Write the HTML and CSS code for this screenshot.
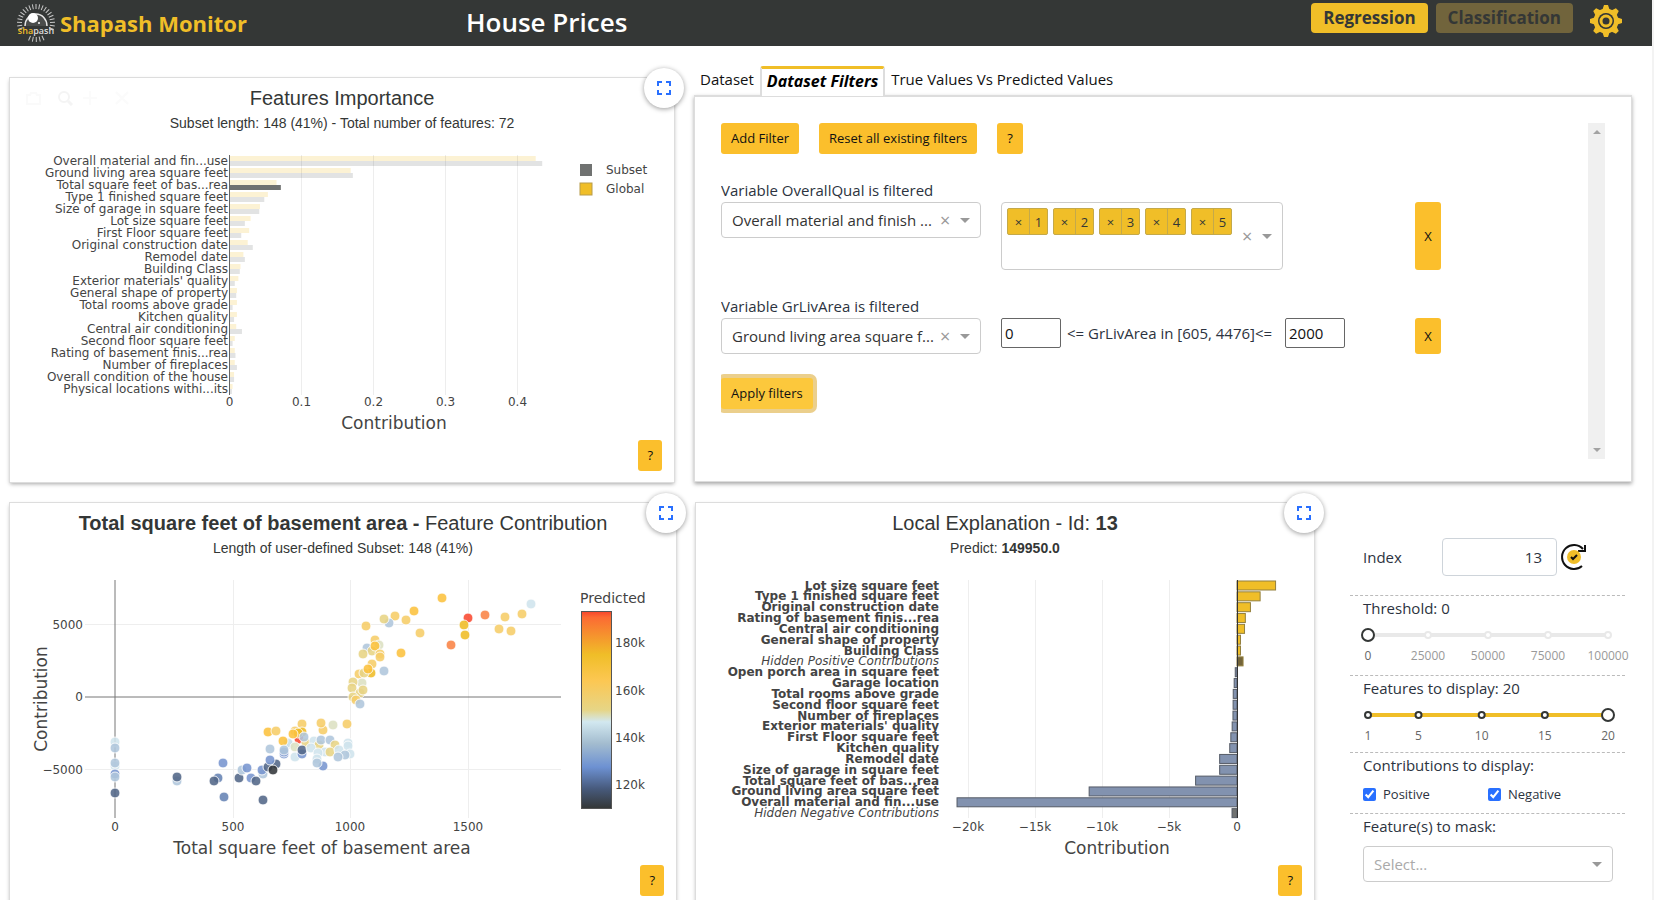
FILE: index.html
```html
<!DOCTYPE html>
<html lang="en">
<head>
  <meta charset="UTF-8">
  <title>Shapash Monitor</title>
  <link rel="stylesheet" href="styles.css">
</head>
<body>

  <header class="header">
    <a class="brand" href="#">
      <svg class="logo" viewBox="0 0 40 40" aria-hidden="true">
        <g id="rays" stroke="#c9c9c9" stroke-width="1"></g>
        <path d="M9 23a11 12 0 0 1 22 0" fill="#4a4c4b" stroke="#e6e6e6" stroke-width="1.5"/>
        <circle cx="17" cy="15" r="5" fill="#fff"/>
        <circle cx="23" cy="20" r="1" fill="#fff"/>
        <text x="20" y="31" text-anchor="middle" class="logo-text"><tspan fill="#f0be28">sha</tspan><tspan fill="#ddd">pash</tspan></text>
      </svg>
      <span>Shapash Monitor</span>
    </a>
    <h1 class="title">House Prices</h1>
    <nav class="modes">
      <button class="mode">Regression</button>
      <button class="mode mode-off">Classification</button>
      <button class="gear" aria-label="Settings">
        <svg viewBox="0 0 32 32">
          <g id="teeth" fill="#f0be28"></g>
          <circle cx="16" cy="16" r="10" fill="none" stroke="#f0be28" stroke-width="5"/>
          <circle cx="16" cy="16" r="8" fill="#343736"/>
          <circle cx="16" cy="16" r="5" fill="none" stroke="#f0be28" stroke-width="3"/>
        </svg>
      </button>
    </nav>
  </header>

  <main class="main">
    <div class="row row-top">
      <section class="card card-importance">
        <h2>Features Importance</h2>
        <p class="subtitle">Subset length: 148 (41%) - Total number of features: 72</p>
        <svg class="plot" id="importance" viewBox="0 60 664 300"></svg>
        <svg class="modebar" viewBox="0 0 106 16" aria-hidden="true">
          <path d="M1 5h3l1-2h5l1 2h3v9h-13z" fill="none" stroke="#fafafa" stroke-width="2"/>
          <circle cx="38" cy="7" r="5" fill="none" stroke="#f4f4f4" stroke-width="2"/>
          <path d="M42 11l4 4" stroke="#f4f4f4" stroke-width="3"/>
          <path d="M64 1v14M57 8h14M90 2l12 12M102 2l-12 12" stroke="#fbfbfb" stroke-width="2"/>
        </svg>
        <button class="expand" aria-label="Expand"><svg viewBox="0 0 14 14"><path d="M1 5V1h4M9 1h4v4M13 9v4H9M5 13H1V9"/></svg></button>
        <button class="btn help">?</button>
      </section>

      <section class="filters">
        <nav class="tabs">
          <a class="tab" href="#">Dataset</a>
          <a class="tab tab-active" href="#">Dataset Filters</a>
          <a class="tab" href="#">True Values Vs Predicted Values</a>
        </nav>
        <div class="panel">
          <div class="panel-body">
            <div class="actions">
              <button class="btn">Add Filter</button>
              <button class="btn">Reset all existing filters</button>
              <button class="btn">?</button>
            </div>

            <label class="filter-label" for="var1">Variable OverallQual is filtered</label>
            <div class="filter">
              <div class="dropdown">
                <select id="var1"><option>Overall material and finish ...</option></select>
                <span class="clear">×</span><span class="arrow"></span>
              </div>
              <div class="multi">
                <div class="chips">
                  <span class="chip"><button aria-label="Remove 1">×</button><span>1</span></span>
                  <span class="chip"><button aria-label="Remove 2">×</button><span>2</span></span>
                  <span class="chip"><button aria-label="Remove 3">×</button><span>3</span></span>
                  <span class="chip"><button aria-label="Remove 4">×</button><span>4</span></span>
                  <span class="chip"><button aria-label="Remove 5">×</button><span>5</span></span>
                </div>
                <span class="clear">×</span><span class="arrow"></span>
              </div>
              <button class="btn remove">X</button>
            </div>

            <label class="filter-label" for="var2">Variable GrLivArea is filtered</label>
            <div class="filter">
              <div class="dropdown">
                <select id="var2"><option>Ground living area square f...</option></select>
                <span class="clear">×</span><span class="arrow"></span>
              </div>
              <div class="range">
                <input type="text" value="0" aria-label="Minimum">
                <span>&lt;= GrLivArea in [605, 4476]&lt;=</span>
                <input type="text" value="2000" aria-label="Maximum">
              </div>
              <button class="btn remove">X</button>
            </div>

            <button class="btn apply">Apply filters</button>
          </div>
          <div class="scrollbar"><span class="up"></span><span class="down"></span></div>
        </div>
      </section>
    </div>

    <div class="row row-bottom">
      <section class="card">
        <h2><b>Total square feet of basement area -</b> Feature Contribution</h2>
        <p class="subtitle">Length of user-defined Subset: 148 (41%)</p>
        <svg class="plot" id="contribution" viewBox="0 60 666 300"></svg>
        <button class="expand" aria-label="Expand"><svg viewBox="0 0 14 14"><path d="M1 5V1h4M9 1h4v4M13 9v4H9M5 13H1V9"/></svg></button>
        <button class="btn help">?</button>
      </section>

      <section class="card">
        <h2>Local Explanation - Id: <b>13</b></h2>
        <p class="subtitle">Predict: <b>149950.0</b></p>
        <svg class="plot" id="local" viewBox="0 60 618 300"></svg>
        <button class="expand" aria-label="Expand"><svg viewBox="0 0 14 14"><path d="M1 5V1h4M9 1h4v4M13 9v4H9M5 13H1V9"/></svg></button>
        <button class="btn help">?</button>
      </section>

      <aside class="side">
        <div class="block block-index">
          <label for="index">Index</label>
          <input id="index" type="text" value="13">
          <button class="refresh" aria-label="Apply index">
            <svg viewBox="0 0 28 28">
              <path d="M22 23a12 12 0 1 1 1-17" fill="none" stroke="#111" stroke-width="2"/>
              <path d="M25 2v6h-7" fill="none" stroke="#111" stroke-width="2"/>
              <circle cx="14" cy="14" r="7" fill="#f0be28"/>
              <path d="M11 14l2 2 4-4" fill="none" stroke="#111" stroke-width="2"/>
            </svg>
          </button>
        </div>

        <div class="block">
          <label for="threshold">Threshold: 0</label>
          <div class="slider">
            <svg class="marks" data-marks="0,25000,50000,75000,100000" data-min="0" data-max="100000"></svg>
            <input id="threshold" type="range" min="0" max="100000" value="0">
          </div>
        </div>

        <div class="block block-features">
          <label for="features">Features to display: 20</label>
          <div class="slider">
            <svg class="marks marks-on" data-marks="1,5,10,15,20" data-min="1" data-max="20"></svg>
            <input id="features" type="range" min="1" max="20" value="20">
          </div>
        </div>

        <div class="block">
          <span>Contributions to display:</span>
          <div class="checks">
            <label><input type="checkbox" checked>Positive</label>
            <label><input type="checkbox" checked>Negative</label>
          </div>
        </div>

        <div class="block">
          <label for="mask">Feature(s) to mask:</label>
          <div class="dropdown mask">
            <select id="mask"><option>Select...</option></select>
            <span class="arrow"></span>
          </div>
        </div>
      </aside>
    </div>
  </main>

  <script src="script.js"></script>
</body>
</html>
```
FILE: styles.css
```css
* {
  box-sizing: border-box;
}

body {
  margin: 0;
  height: 100vh;
  overflow: hidden;
  border-right: 2px solid #f3f3f3;
  font-family: "Open Sans", "Noto Sans", sans-serif;
  font-size: 15px;
  line-height: 24px;
  color: #2c3340;
  background: #fff;
}

button, input, select {
  font: inherit;
  color: inherit;
}

button {
  border: none;
  padding: 0;
  background: none;
  cursor: pointer;
}

/* Header */
.header {
  display: grid;
  grid-template-columns: 467fr 847fr auto;
  height: 46px;
  padding-right: 30px;
  background: #343736;
}

.brand {
  display: flex;
  align-items: center;
  gap: 4px;
  padding-left: 16px;
  font-size: 22px;
  font-weight: 700;
  color: #f0be28;
  text-decoration: none;
}

.logo {
  width: 40px;
  height: 42px;
}

.logo-text {
  font-size: 9px;
  font-weight: 600;
}

.title {
  margin: 0;
  font-size: 26px;
  font-weight: 600;
  line-height: 44px;
  color: #fff;
}

.modes {
  display: flex;
  align-items: flex-start;
  gap: 8px;
  padding-top: 3px;
}

.mode {
  height: 30px;
  padding: 0 12px;
  border-radius: 4px;
  font-size: 17px;
  font-weight: 700;
  color: #343736;
  background: #f0be28;
}

.mode-off {
  background: #71643c;
}

.gear {
  width: 32px;
  height: 36px;
  margin-left: 9px;
}

.gear svg {
  display: block;
  width: 32px;
}

/* Layout */
.main {
  padding: 20px 20px 0 10px;
}

.row {
  display: grid;
}

.row-top {
  grid-template-columns: 664fr 938fr;
  gap: 20px;
}

.row-bottom {
  grid-template-columns: 666fr 20fr 618fr 36fr 275fr 7fr;
  margin-top: 21px;
}

.row-bottom > :nth-child(2) {
  grid-column: 3;
}

.row-bottom > .side {
  grid-column: 5;
}

/* Chart cards */
.card {
  position: relative;
  height: 404px;
  padding-top: 7px;
  box-shadow: 0 0 0 1px #ddd, 0 2px 4px rgba(0, 0, 0, 0.35);
  background: #fff;
  font-family: "Liberation Sans", Arial, sans-serif;
  text-align: center;
}

.card-importance {
  margin-top: 12px;
}

.card h2 {
  margin: 0;
  font-size: 20px;
  font-weight: 400;
  line-height: 26px;
  color: #343736;
}

.subtitle {
  margin: 0 0 3px;
  font-size: 14px;
  line-height: 24px;
  color: #343736;
}

.plot {
  display: block;
  width: 100%;
  height: 300px;
  font-family: "DejaVu Sans", Verdana, sans-serif;
  font-size: 12px;
  fill: #444;
}

.plot .axis-title {
  font-size: 17px;
}

.plot .bar-title {
  font-size: 14px;
}

.plot .strong {
  font-weight: 700;
}

.plot .hidden-row {
  font-style: italic;
}

.modebar {
  position: absolute;
  left: 16px;
  top: 12px;
  width: 106px;
}

.expand {
  position: absolute;
  right: -10px;
  top: -10px;
  width: 40px;
  height: 40px;
  border-radius: 50%;
  background: #fff;
  box-shadow: 0 1px 5px rgba(0, 0, 0, 0.4);
}

.expand svg {
  display: block;
  width: 14px;
  margin: auto;
  fill: none;
  stroke: #2970ff;
  stroke-width: 2;
}

.btn {
  height: 31px;
  padding: 0 9px;
  border-radius: 3px;
  font-family: "Open Sans", "Noto Sans", sans-serif;
  font-size: 13px;
  line-height: 31px;
  color: #111;
  background: #fbbf2c;
}

.help {
  position: absolute;
  right: 12px;
  bottom: 11px;
}

/* Filters */
.filters {
  display: flex;
  flex-direction: column;
}

.tabs {
  display: flex;
  height: 30px;
}

.tab {
  padding: 1px 6px 0;
  color: #111;
  text-decoration: none;
}

.tab-active {
  position: relative;
  z-index: 1;
  padding: 0 5px;
  border: solid #ddd;
  border-width: 3px 2px 0;
  border-top-color: #f0be28;
  border-radius: 3px 3px 0 0;
  font-size: 16px;
  font-weight: 700;
  font-style: italic;
  background: #fff;
  color: #000;
}

.panel {
  display: flex;
  flex: 1;
  margin-top: -1px;
  padding: 26px 26px 22px;
  border: 1px solid #ddd;
  border-top-width: 2px;
  box-shadow: 0 2px 4px rgba(0, 0, 0, 0.35);
}

.panel-body {
  flex: 1;
  overflow: hidden;
}

.actions {
  display: flex;
  gap: 20px;
  margin-bottom: 24px;
}

.actions .btn {
  padding: 0 10px;
}

.filter-label {
  display: block;
}

.filter {
  display: grid;
  grid-template-columns: 260px 394px 26px;
  column-gap: 20px;
  margin-bottom: 24px;
}

.dropdown {
  display: flex;
  align-items: center;
  height: 36px;
  padding-right: 10px;
  border: 1px solid #ccc;
  border-radius: 4px;
  color: #333;
}

.dropdown select {
  flex: 1;
  min-width: 0;
  height: 34px;
  padding: 0 0 0 10px;
  border: none;
  appearance: none;
  background: none;
}

.clear {
  width: 20px;
  font-size: 18px;
  color: #999;
}

.arrow {
  border: 5px solid transparent;
  border-top-color: #999;
  border-bottom: none;
}

.multi {
  display: flex;
  align-items: center;
  width: 282px;
  height: 68px;
  padding: 5px 10px 5px 5px;
  border: 1px solid #ccc;
  border-radius: 4px;
}

.chips {
  display: flex;
  flex: 1;
  gap: 5px;
  align-self: flex-start;
}

.chip {
  display: flex;
  width: 41px;
  height: 27px;
  border: 1px solid #c4a94a;
  border-radius: 2px;
  font-size: 13px;
  line-height: 27px;
  color: #343736;
  background: #f0be28;
}

.chip button {
  width: 22px;
  border-right: 1px solid #c4a94a;
}

.chip span {
  flex: 1;
  text-align: center;
}

.remove {
  height: 100%;
}

.range {
  display: flex;
  align-items: flex-start;
  gap: 6px;
  width: 344px;
  line-height: 30px;
}

.range input {
  width: 60px;
  height: 30px;
  padding: 0 3px;
  border: 1px solid #666;
  border-radius: 2px;
  color: #111;
}

.range span {
  flex: 1;
  white-space: nowrap;
}

.apply {
  padding: 0 10px;
  background: #fcc83c;
  box-shadow: 0 0 0 4px #ebcf8c;
}

.scrollbar {
  display: flex;
  flex-direction: column;
  justify-content: space-between;
  align-items: center;
  width: 17px;
  padding: 7px 0;
  background: #f0f0f0;
}

.up, .down {
  border: 4px solid transparent;
}

.up {
  border-bottom-color: #a3a3a3;
  border-top: none;
}

.down {
  border-top-color: #a3a3a3;
  border-bottom: none;
}

/* Side controls */
.block {
  padding: 0 12px 6px 13px;
  border-bottom: 1px dashed #bbb;
}

.block:last-child {
  border: none;
}

.block-index {
  display: flex;
  align-items: center;
  padding: 35px 0 19px 13px;
}

.block-index label {
  flex: 1;
}

.block-index input {
  width: 115px;
  height: 38px;
  padding: 0 14px;
  border: 1px solid #ced4da;
  border-radius: 4px;
  text-align: right;
}

.refresh {
  width: 28px;
  height: 28px;
  margin: 0 37px 0 3px;
}

.block-features {
  padding-bottom: 3px;
}

.slider {
  display: grid;
  margin: 5px -2px 0;
}

.slider > * {
  grid-area: 1 / 1;
}

.slider input {
  width: 100%;
  height: 20px;
  margin: 0;
  appearance: none;
  background: none;
}

.slider input::-webkit-slider-thumb {
  appearance: none;
  width: 14px;
  height: 14px;
  border: 2px solid #343736;
  border-radius: 50%;
  background: #fff;
}

.marks {
  width: calc(100% - 14px);
  height: 44px;
  margin: 0 7px;
  overflow: visible;
  font-size: 12px;
  text-anchor: middle;
  fill: #999;
}

.marks line {
  stroke: #e9e9e9;
  stroke-width: 4;
}

.marks circle {
  fill: #fff;
  stroke: #e9e9e9;
  stroke-width: 2;
}

.marks-on {
  fill: #666;
}

.marks-on line {
  stroke: #f0be28;
}

.marks-on circle {
  stroke: #343736;
}

.marks .current {
  fill: #666;
}

.checks {
  display: grid;
  grid-template-columns: 1fr 1fr;
  padding: 5px 0 1px;
  font-size: 13px;
}

.checks label {
  display: flex;
  align-items: center;
  gap: 7px;
}

.checks input {
  width: 13px;
  height: 13px;
  margin: 0;
  accent-color: #2970ff;
}

.mask {
  margin-top: 8px;
}

.mask select {
  color: #aaa;
}
```
FILE: script.js
```js
const svg = id => document.getElementById(id);

const line = (x1, y1, x2, y2, color) =>
  `<path d="M${x1} ${y1}L${x2} ${y2}" stroke="${color}"/>`;
const text = (x, y, anchor, str, cls = '') =>
  `<text x="${x}" y="${y}" text-anchor="${anchor}" class="${cls}">${str}</text>`;

// Features importance: [label, global, subset]
const importance = [
  ['Overall material and fin...use', 0.426, 0.435],
  ['Ground living area square feet', 0.169, 0.172],
  ['Total square feet of bas...rea', 0.066, 0.072],
  ['Type 1 finished square feet', 0.054, 0.049],
  ['Size of garage in square feet', 0.043, 0.042],
  ['Lot size square feet', 0.030, 0.022],
  ['First Floor square feet', 0.028, 0.017],
  ['Original construction date', 0.026, 0.033],
  ['Remodel date', 0.020, 0.022],
  ['Building Class', 0.016, 0.015],
  ["Exterior materials' quality", 0.013, 0.008],
  ['General shape of property', 0.011, 0.010],
  ['Total rooms above grade', 0.011, 0.005],
  ['Kitchen quality', 0.011, 0.007],
  ['Central air conditioning', 0.010, 0.018],
  ['Second floor square feet', 0.008, 0.005],
  ['Rating of basement finis...rea', 0.008, 0.009],
  ['Number of fireplaces', 0.008, 0.011],
  ['Overall condition of the house', 0.007, 0.007],
  ['Physical locations withi...its', 0.005, 0.004]
];

function drawImportance() {
  let out = '';
  importance.forEach(([label, all, subset], i) => {
    const y = 78 + i * 12;
    const on = i === 2;
    out += `<rect x="219" y="${y}" width="${all * 720}" height="5" fill="#f0be28" opacity="0.2"/>`;
    out += `<rect x="219" y="${y + 5}" width="${subset * 720}" height="5" fill="#707271" opacity="${on ? 1 : 0.2}"/>`;
    out += text(218, y + 9, 'end', label);
  });
  [0, 0.1, 0.2, 0.3, 0.4].forEach(v => {
    const x = Math.round(219 + v * 720) + 0.5;
    out += line(x, 77, x, 317, v ? 'rgba(0,0,0,0.07)' : '#666');
    out += text(x, 328, 'middle', v);
  });
  out += text(384, 351, 'middle', 'Contribution', 'axis-title');
  out += '<rect x="570" y="86" width="12" height="12" fill="#707271"/>' + text(596, 96, 'start', 'Subset');
  out += '<rect x="570" y="105" width="12" height="12" fill="#f0be28" stroke="#b89c4a"/>' + text(596, 115, 'start', 'Global');
  svg('importance').innerHTML = out;
}

// Local explanation, strongest positive first
const local = [
  ['Lot size square feet', 2870],
  ['Type 1 finished square feet', 1720],
  ['Original construction date', 1000],
  ['Rating of basement finis...rea', 620],
  ['Central air conditioning', 560],
  ['General shape of property', 260],
  ['Building Class', 260],
  ['Hidden Positive Contributions', 450],
  ['Open porch area in square feet', -130],
  ['Garage location', -210],
  ['Total rooms above grade', -280],
  ['Second floor square feet', -290],
  ['Number of fireplaces', -300],
  ["Exterior materials' quality", -360],
  ['First Floor square feet', -460],
  ['Kitchen quality', -540],
  ['Remodel date', -1290],
  ['Size of garage in square feet', -1290],
  ['Total square feet of bas...rea', -3080],
  ['Ground living area square feet', -11000],
  ['Overall material and fin...use', -20830],
  ['Hidden Negative Contributions', -370]
];

function drawLocal() {
  let out = '';
  [[272, '−20k'], [339, '−15k'], [406, '−10k'], [473, '−5k'], [541, '0']].forEach(([x, label]) => {
    out += line(x + 0.5, 77, x + 0.5, 315, '#eee') + text(x, 328, 'middle', label);
  });
  local.forEach(([label, value], i) => {
    const y = 77.5 + i * 10.84;
    const w = Math.abs(value) / 74.4;
    const hidden = label.startsWith('Hidden');
    let fill = value > 0 ? '#f0be28' : '#8292af';
    if (hidden) fill = value > 0 ? '#73643a' : '#707271';
    out += `<rect x="${value > 0 ? 541 : 541 - w}" y="${y + 0.5}" width="${w}" height="9" fill="${fill}" stroke="${value > 0 ? '#94803e' : '#555b66'}"/>`;
    out += text(243, Math.round(y + 9), 'end', label, hidden ? 'hidden-row' : 'strong');
  });
  out += line(541.5, 77, 541.5, 315, '#333');
  out += text(421, 351, 'middle', 'Contribution', 'axis-title');
  svg('local').innerHTML = out;
}

// Predicted price colors, dark = cheap, red = expensive
const colors = {
  k: '#33373b', n: '#536788', d: '#6683b5', b: '#7896d0', l: '#b0c7dc', p: '#d0e4ed',
  g: '#dce1c2', t: '#e8d485', y: '#f6cd68', o: '#fcc23e', a: '#f0bd26', c: '#fa8345', r: '#fa4a30'
};

const points = [
  [105, 239, 'p'], [105, 245, 'l'], [105, 263, 'p'], [105, 260, 'l'], [105, 271, 'b'], [105, 274, 'l'], [105, 290, 'n'],
  [167, 278, 'l'], [167, 274, 'n'], [208, 275, 'd'], [204, 278, 'n'], [213, 260, 'b'], [214, 294, 'd'],
  [229, 275, 'n'], [232, 267, 'l'], [237, 265, 'b'], [241, 275, 'b'], [246, 278, 'n'], [253, 297, 'n'],
  [253, 271, 'l'], [252, 267, 'b'], [266, 261, 'n'], [258, 264, 'n'], [260, 257, 'b'], [260, 246, 'l'], [263, 267, 'k'],
  [258, 229, 'o'], [266, 228, 'y'], [292, 221, 'y'], [313, 227, 'y'], [311, 220, 'y'], [323, 222, 'g'], [337, 221, 'y'],
  [285, 228, 'y'], [292, 229, 'a'], [289, 236, 'r'], [288, 230, 'a'], [283, 231, 'o'],
  [279, 241, 'l'], [278, 240, 'p'], [273, 238, 'o'], [274, 251, 'b'], [274, 249, 'b'], [274, 247, 'l'],
  [285, 244, 'g'], [296, 240, 't'], [294, 234, 'l'], [285, 254, 'p'], [292, 251, 'b'], [292, 247, 'n'],
  [304, 238, 'p'], [309, 242, 't'], [311, 237, 'l'], [320, 237, 'l'], [301, 245, 'p'], [315, 249, 'p'], [308, 250, 'p'],
  [325, 242, 't'], [320, 249, 't'], [338, 240, 'p'], [338, 243, 'p'], [329, 247, 'p'], [340, 251, 'p'], [335, 252, 'l'],
  [328, 254, 'l'], [307, 256, 'p'], [313, 263, 'b'], [307, 260, 'l'],
  [432, 95, 'o'], [404, 108, 'o'], [385, 113, 'y'], [396, 117, 'y'], [379, 120, 'l'], [374, 116, 't'], [356, 123, 'y'],
  [410, 130, 'y'], [458, 115, 'r'], [454, 122, 'a'], [455, 132, 'a'], [475, 112, 'c'], [441, 142, 'c'], [521, 101, 'p'],
  [512, 111, 'y'], [495, 114, 'y'], [489, 126, 'y'], [501, 128, 'y'], [391, 150, 'o'], [365, 137, 'y'], [369, 142, 'g'],
  [357, 145, 'l'], [362, 148, 't'], [365, 143, 'o'], [353, 151, 't'], [370, 151, 'y'], [370, 154, 'y'], [362, 161, 'y'],
  [361, 170, 'a'], [349, 171, 'y'], [354, 170, 't'], [358, 166, 'o'], [374, 168, 'l'], [352, 180, 'g'], [343, 179, 't'],
  [342, 185, 't'], [350, 190, 't'], [353, 187, 't'], [343, 194, 't'], [346, 197, 'y'], [350, 201, 'l']
];

function drawContribution() {
  let out = `<defs><linearGradient id="scale" x1="0" y1="0" x2="0" y2="1">
    <stop offset="0" stop-color="#f6452c"/><stop offset="0.03" stop-color="#fb6b33"/>
    <stop offset="0.22" stop-color="#f0be28"/><stop offset="0.35" stop-color="#fcc752"/>
    <stop offset="0.5" stop-color="#e6d586"/><stop offset="0.56" stop-color="#d2e8f0"/>
    <stop offset="0.67" stop-color="#a3bccf"/><stop offset="0.79" stop-color="#6d91d2"/>
    <stop offset="0.9" stop-color="#475a7c"/><stop offset="1" stop-color="#343736"/>
  </linearGradient></defs>`;
  [[223, '500'], [340, '1000'], [458, '1500']].forEach(([x, label]) => {
    out += line(x + 0.5, 77, x + 0.5, 315, '#eee') + text(x, 328, 'middle', label);
  });
  out += line(75, 121.5, 551, 121.5, '#eee') + text(73, 126, 'end', '5000');
  out += line(75, 266.5, 551, 266.5, '#eee') + text(73, 271, 'end', '−5000');
  out += line(75, 194, 551, 194, '#777') + text(73, 198, 'end', '0');
  out += line(105, 77, 105, 315, '#777') + text(105, 328, 'middle', '0');
  points.forEach(([x, y, c]) => {
    out += `<circle cx="${x}" cy="${y}" r="5" fill="${colors[c]}" stroke="#fff" opacity="0.88"/>`;
  });
  out += text(312, 351, 'middle', 'Total square feet of basement area', 'axis-title');
  out += '<text transform="translate(37 196) rotate(-90)" text-anchor="middle" class="axis-title">Contribution</text>';
  out += text(570, 100, 'start', 'Predicted', 'bar-title');
  out += '<rect x="571.5" y="108.5" width="30" height="197" fill="url(#scale)" stroke="#555"/>';
  [[144, '180k'], [192, '160k'], [239, '140k'], [286, '120k']].forEach(([y, label]) => {
    out += text(605, y, 'start', label);
  });
  svg('contribution').innerHTML = out;
}

// Slider rails, dots and mark labels
document.querySelectorAll('.marks').forEach(el => {
  const { marks, min, max } = el.dataset;
  let out = '<line x1="0" x2="100%" y1="10" y2="10"/>';
  marks.split(',').forEach((m, i) => {
    const x = (m - min) / (max - min) * 100 + '%';
    out += `<circle cx="${x}" cy="10" r="3"/>` + text(x, 35, 'middle', m, i ? '' : 'current');
  });
  el.innerHTML = out;
});

// Logo rays and gear teeth
let rays = '';
for (let a = -110; a <= 110; a += 11) {
  rays += `<path d="M20 6V1" transform="rotate(${a} 20 20)"/>`;
}
for (let a = 155; a <= 205; a += 12) {
  rays += `<path d="M20 6V1" transform="rotate(${a} 20 20)"/>`;
}
svg('rays').innerHTML = rays;

let teeth = '';
for (let a = 0; a < 360; a += 45) {
  teeth += `<path d="M12 6l2-6h4l2 6z" transform="rotate(${a} 16 16)"/>`;
}
svg('teeth').innerHTML = teeth;

drawImportance();
drawLocal();
drawContribution();
```
